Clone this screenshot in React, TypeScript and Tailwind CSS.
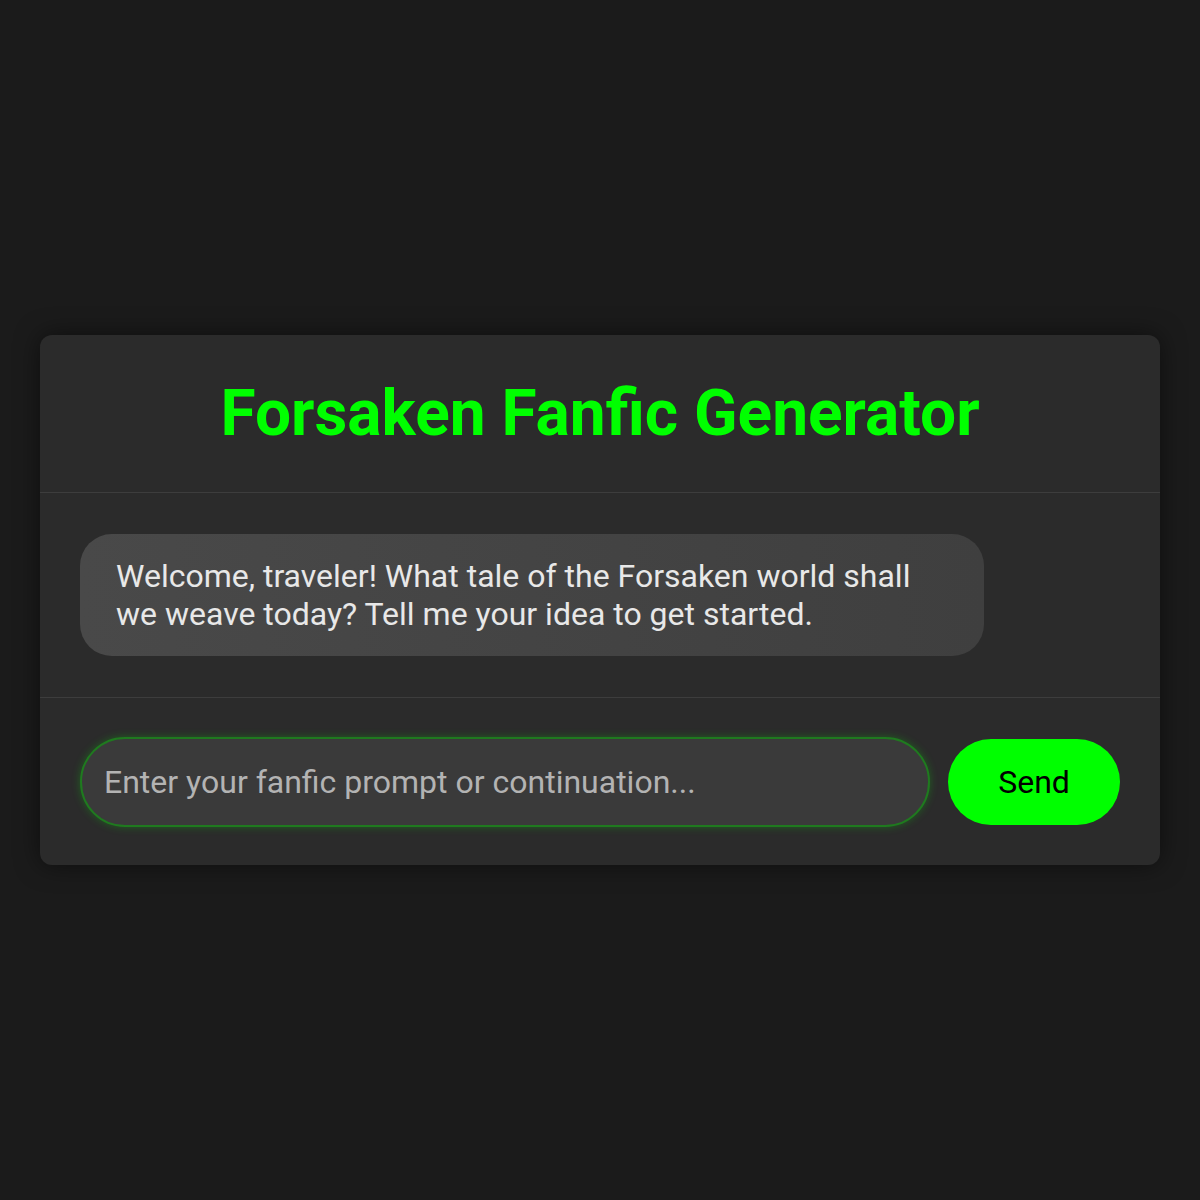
import React, { useState } from 'react';

const font = { fontFamily: 'Roboto, "Noto Sans", Arial, sans-serif' };

export default function App() {
  const [prompt, setPrompt] = useState('');

  return (
    <div className="min-h-[1200px] w-full bg-[#1b1b1b] flex items-center justify-center px-10" style={font}>
      <div className="w-full rounded-xl bg-[#2b2b2b] shadow-[0_0_24px_rgba(0,0,0,0.5)] flex flex-col">
        {/* header */}
        <div className="h-[158px] flex items-center justify-center border-b border-[#3d3d3d]">
          <h1 className="text-[64px] font-bold text-[#00ff00] leading-none">Forsaken Fanfic Generator</h1>
        </div>

        {/* messages */}
        <div className="h-[205px] px-10 pt-[41px] border-b border-[#3d3d3d]">
          <div className="w-[904px] rounded-[32px] bg-gradient-to-r from-[#494949] to-[#3f3f3f] px-9 py-[23px] text-[32px] leading-[38px] text-[#e8e8e8]">
            Welcome, traveler! What tale of the Forsaken world shall we weave today? Tell me your idea to get started.
          </div>
        </div>

        {/* input */}
        <div className="h-[167px] px-10 flex items-center gap-[18px]">
          <input
            autoFocus
            value={prompt}
            onChange={e => setPrompt(e.target.value)}
            placeholder="Enter your fanfic prompt or continuation..."
            className="flex-1 h-[90px] rounded-full bg-[#3a3a3a] border-2 border-[#1f7a1f] shadow-[0_0_8px_rgba(0,255,0,0.25)] pl-[22px] pr-6 text-[32px] text-[#e8e8e8] placeholder:text-[#b3b3b3] caret-white outline-none"
            style={font}
          />
          <button className="w-[172px] h-[86px] rounded-full bg-[#00ff00] text-black text-[32px]" style={font}>
            Send
          </button>
        </div>
      </div>
    </div>
  );
}
